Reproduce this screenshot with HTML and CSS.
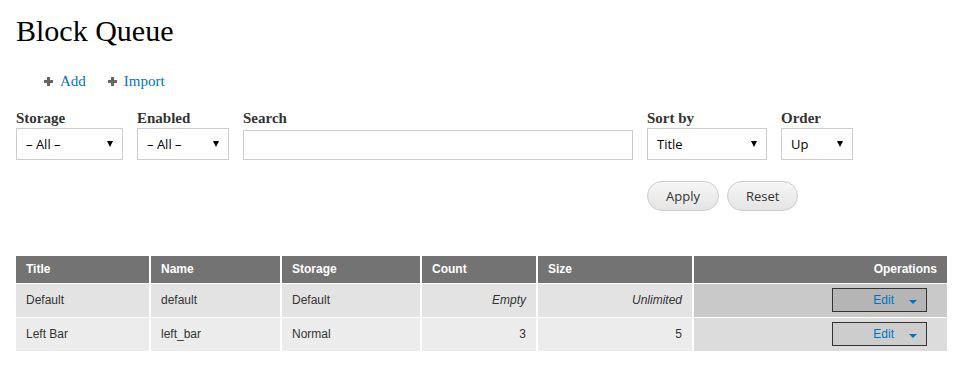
FILE: index.html
```html
<!DOCTYPE html>
<html lang="en">
<head>
    <meta charset="UTF-8">
    <title>Block Queue</title>
    <link rel="stylesheet" href="styles.css">
</head>
<body>
    <h1 class="page-title">Block Queue</h1>

    <ul class="action-links">
        <li><a href="#"><span class="plus"></span>Add</a></li>
        <li><a href="#"><span class="plus"></span>Import</a></li>
    </ul>

    <form class="filters">
        <div class="filter-row">
            <div class="field">
                <label for="storage">Storage</label>
                <div class="select w-storage" id="storage"><span>– All –</span><span class="caret"></span></div>
            </div>
            <div class="field">
                <label for="enabled">Enabled</label>
                <div class="select w-enabled" id="enabled"><span>– All –</span><span class="caret"></span></div>
            </div>
            <div class="field">
                <label for="search">Search</label>
                <input type="text" id="search" class="search">
            </div>
            <div class="field">
                <label for="sort">Sort by</label>
                <div class="select w-sort" id="sort"><span>Title</span><span class="caret"></span></div>
            </div>
            <div class="field">
                <label for="order">Order</label>
                <div class="select w-order" id="order"><span>Up</span><span class="caret"></span></div>
            </div>
        </div>
        <div class="button-row">
            <button type="button" class="btn">Apply</button>
            <button type="button" class="btn">Reset</button>
        </div>
    </form>

    <table class="queue">
        <thead>
            <tr>
                <th class="c-title">Title</th>
                <th class="c-name">Name</th>
                <th class="c-storage">Storage</th>
                <th class="c-count">Count</th>
                <th class="c-size">Size</th>
                <th class="c-ops">Operations</th>
            </tr>
        </thead>
        <tbody>
            <tr class="odd">
                <td>Default</td>
                <td>default</td>
                <td>Default</td>
                <td class="num"><em>Empty</em></td>
                <td class="num"><em>Unlimited</em></td>
                <td class="ops"><span class="edit">Edit<span class="drop"></span></span></td>
            </tr>
            <tr class="even">
                <td>Left Bar</td>
                <td>left_bar</td>
                <td>Normal</td>
                <td class="num">3</td>
                <td class="num">5</td>
                <td class="ops"><span class="edit">Edit<span class="drop"></span></span></td>
            </tr>
        </tbody>
    </table>
</body>
</html>
```

FILE: styles.css
```css
* {
    box-sizing: border-box;
    margin: 0;
    padding: 0;
}

body {
    padding: 12px 16px;
    background-color: #fff;
    color: #333;
    font-family: "Liberation Serif", serif;
}

.page-title {
    font-weight: normal;
    font-size: 30px;
    line-height: 38px;
    color: #000;
}

.action-links {
    list-style: none;
    display: flex;
    gap: 22px;
    margin: 21px 0 0 28px;
}

.action-links a {
    display: flex;
    align-items: center;
    font-size: 15px;
    line-height: 20px;
    color: #0074bd;
    text-decoration: none;
}

.plus {
    position: relative;
    width: 9px;
    height: 9px;
    margin-right: 7px;
}

.plus::before,
.plus::after {
    content: "";
    position: absolute;
    background-color: #666;
}

.plus::before {
    left: 0;
    top: 3px;
    width: 9px;
    height: 3px;
}

.plus::after {
    left: 3px;
    top: 0;
    width: 3px;
    height: 9px;
}

.filters {
    margin-top: 17px;
}

.filter-row {
    display: flex;
    gap: 14px;
}

.field label {
    display: block;
    font-weight: bold;
    font-size: 15px;
    line-height: 20px;
    color: #333;
}

.select {
    display: flex;
    justify-content: space-between;
    align-items: center;
    height: 32px;
    padding: 0 9px 0 9px;
    border: 1px solid #ccc;
    font-family: "Open Sans", sans-serif;
    font-size: 13px;
    color: #000;
}

.caret {
    width: 0;
    height: 0;
    border-left: 3px solid transparent;
    border-right: 3px solid transparent;
    border-top: 6px solid #000;
}

.w-storage { width: 107px; }
.w-enabled { width: 92px; }
.w-sort { width: 120px; }
.w-order { width: 72px; }

.search {
    display: block;
    width: 390px;
    height: 30px;
    margin-top: 2px;
    border: 1px solid #ccc;
}

.button-row {
    display: flex;
    gap: 8px;
    margin: 21px 0 0 631px;
}

.btn {
    height: 30px;
    padding: 0 18px;
    border: 1px solid #ccc;
    border-radius: 15px;
    background: linear-gradient(#f6f6f6, #e4e4e4);
    font-family: "Open Sans", sans-serif;
    font-size: 13px;
    color: #333;
}

.queue {
    width: 931px;
    margin-top: 45px;
    border-collapse: collapse;
    font-family: "Liberation Sans", sans-serif;
    font-size: 12px;
}

.queue th,
.queue td {
    border-left: 2px solid #fff;
    border-bottom: 1px solid #fff;
    padding: 0 10px;
    text-align: left;
    color: #333;
}

.queue th:first-child,
.queue td:first-child {
    border-left: 0;
}

.queue th {
    height: 27px;
    background-color: #737373;
    color: #fff;
    font-weight: bold;
}

.queue td {
    height: 34px;
}

.c-title { width: 134px; }
.c-name { width: 131px; }
.c-storage { width: 140px; }
.c-count { width: 116px; }
.c-size { width: 156px; }

.queue th.c-ops {
    text-align: right;
}

.odd td { background-color: #e3e3e3; }
.even td { background-color: #ececec; }
.odd td.ops { background-color: #c9c9c9; }
.even td.ops { background-color: #dcdcdc; }

.num {
    text-align: right !important;
}

.queue td.ops {
    text-align: right;
    padding-right: 20px;
}

.edit {
    display: inline-flex;
    align-items: center;
    justify-content: flex-end;
    width: 95px;
    height: 24px;
    padding-right: 9px;
    border: 1px solid #333;
    font-size: 12px;
    color: #0074bd;
    vertical-align: middle;
}

.odd .edit { background-color: #b5b5b5; }
.even .edit { background-color: #cdcdcd; }

.drop {
    width: 0;
    height: 0;
    margin-left: 15px;
    margin-top: 3px;
    border-left: 4px solid transparent;
    border-right: 4px solid transparent;
    border-top: 4px solid #0074bd;
}
```
